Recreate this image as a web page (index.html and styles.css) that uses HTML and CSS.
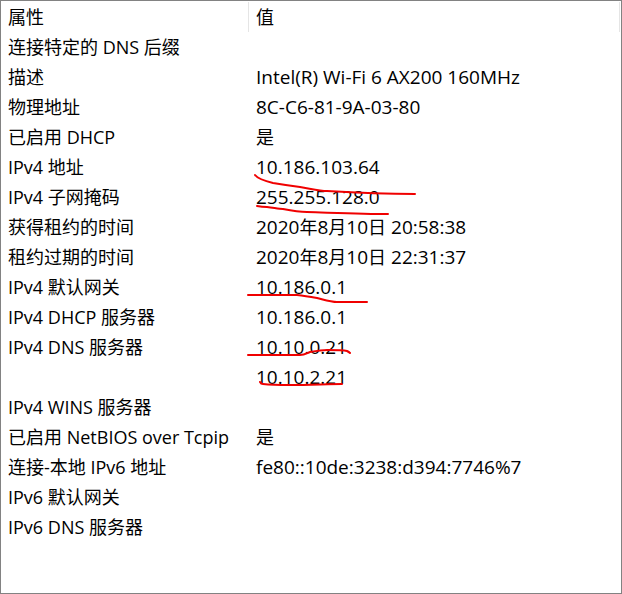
FILE: index.html
```html
<!DOCTYPE html>
<html lang="zh-CN">
<head>
    <meta charset="UTF-8">
    <title>网络连接详细信息</title>
    <link rel="stylesheet" href="styles.css">
</head>
<body>
    <div class="details">
        <div class="list-header">
            <div class="head-cell">属性</div>
            <div class="head-cell head-value">值</div>
        </div>

        <div class="list-body">
            <div class="cell">连接特定的 DNS 后缀</div><div class="cell value"></div>
            <div class="cell">描述</div><div class="cell value">Intel(R) Wi-Fi 6 AX200 160MHz</div>
            <div class="cell">物理地址</div><div class="cell value">8C-C6-81-9A-03-80</div>
            <div class="cell">已启用 DHCP</div><div class="cell value"><span class="cjk">是</span></div>
            <div class="cell">IPv4 地址</div><div class="cell value">10.186.103.64</div>
            <div class="cell">IPv4 子网掩码</div><div class="cell value">255.255.128.0</div>
            <div class="cell">获得租约的时间</div><div class="cell value">2020<span class="cjk">年</span>8<span class="cjk">月</span>10<span class="cjk">日</span> 20:58:38</div>
            <div class="cell">租约过期的时间</div><div class="cell value">2020<span class="cjk">年</span>8<span class="cjk">月</span>10<span class="cjk">日</span> 22:31:37</div>
            <div class="cell">IPv4 默认网关</div><div class="cell value">10.186.0.1</div>
            <div class="cell">IPv4 DHCP 服务器</div><div class="cell value">10.186.0.1</div>
            <div class="cell">IPv4 DNS 服务器</div><div class="cell value">10.10.0.21</div>
            <div class="cell"></div><div class="cell value">10.10.2.21</div>
            <div class="cell">IPv4 WINS 服务器</div><div class="cell value"></div>
            <div class="cell">已启用 NetBIOS over Tcpip</div><div class="cell value"><span class="cjk">是</span></div>
            <div class="cell">连接-本地 IPv6 地址</div><div class="cell value">fe80::10de:3238:d394:7746%7</div>
            <div class="cell">IPv6 默认网关</div><div class="cell value"></div>
            <div class="cell">IPv6 DNS 服务器</div><div class="cell value"></div>
        </div>

        <!-- hand-drawn red marks on top of the list -->
        <svg class="marks" width="622" height="594" viewBox="0 0 622 594">
            <path d="M255 175 C258 179 265 181 273 183 C285 185 292 186 300 187 C312 189 320 191 327 191 C360 193 390 194 415 194"/>
            <path d="M257 206 C262 207 264 207 267 207 C275 208 279 209 283 209 C293 211 300 212 307 212 C340 213 365 214 388 214"/>
            <path d="M248 295 C270 295 285 295 297 295 C305 296 311 297 317 298 C325 300 331 302 337 302 C350 302 360 302 367 302"/>
            <path d="M248 355 C270 355 290 355 300 355 C305 355 307 353 310 352 C316 351 322 350 327 350 C335 350 343 350 347 351 C349 352 350 353 350 353"/>
            <path d="M260 382 C261 384 262 384 263 384 C272 385 280 385 290 385 C310 385 328 384 342 384"/>
        </svg>
    </div>
</body>
</html>
```

FILE: styles.css
```css
* {
    margin: 0;
    padding: 0;
    box-sizing: border-box;
}

body {
    font-family: "Open Sans", "Noto Sans CJK SC", sans-serif;
    font-size: 18px;
    color: #000;
    background: #fff;
}

.details {
    position: relative;
    width: 622px;
    height: 594px;
    border: 1px solid #828282;
    padding-top: 1px;
    overflow: hidden;
}

.list-header {
    display: grid;
    grid-template-columns: 248px 1fr;
    height: 30px;
    line-height: 30px;
}

.head-cell {
    padding-left: 7px;
    border-right: 1px solid #e5e5e5;
}

.head-value {
    margin-right: 1px;
}

.list-body {
    display: grid;
    grid-template-columns: 248px 1fr;
    grid-auto-rows: 30px;
    line-height: 30px;
}

.cell {
    padding-left: 7px;
    white-space: nowrap;
}

/* latin digits in the value column run a bit larger than the labels */
.value {
    padding-left: 7px;
    font-size: 19px;
}

.cjk {
    font-size: 18px;
}

.marks {
    position: absolute;
    left: -1px;
    top: -1px;
    pointer-events: none;
}

.marks path {
    fill: none;
    stroke: #f00000;
    stroke-width: 2;
    stroke-linecap: round;
}
```
